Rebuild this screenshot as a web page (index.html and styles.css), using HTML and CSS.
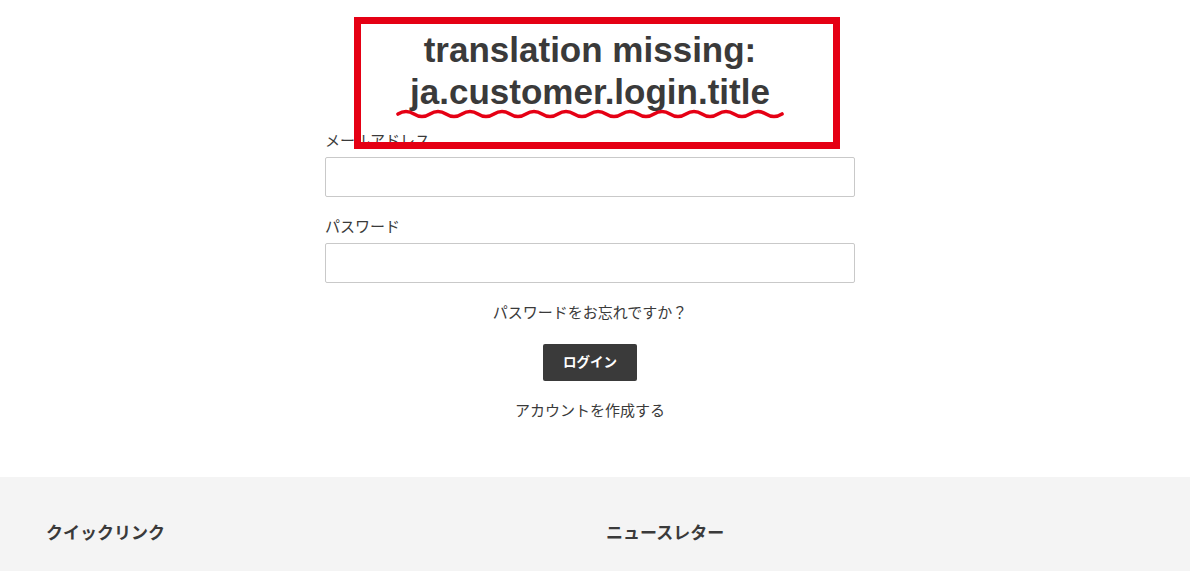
FILE: index.html
```html
<!DOCTYPE html>
<html lang="ja">
<head>
<meta charset="utf-8">
<title>ログイン</title>
<link rel="stylesheet" href="styles.css">
</head>
<body>
<main class="main">
  <div class="login">
    <h1 class="title">translation missing:<br>ja.customer.login.title</h1>
    <form class="form">
      <label class="label" for="email">メールアドレス</label>
      <input class="input" id="email" type="email">
      <label class="label" for="pw">パスワード</label>
      <input class="input" id="pw" type="password">
      <a class="link forgot" href="#">パスワードをお忘れですか？</a>
      <button class="btn" type="button">ログイン</button>
      <a class="link create" href="#">アカウントを作成する</a>
    </form>
  </div>
</main>
<div class="annot-box"></div>
<svg class="annot-wave" width="392" height="16" viewBox="0 0 392 16">
  <path d="M2 8 q8 -5 16 0 t16 0 t16 0 t16 0 t16 0 t16 0 t16 0 t16 0 t16 0 t16 0 t16 0 t16 0 t16 0 t16 0 t16 0 t16 0 t16 0 t16 0 t16 0 t16 0 t16 0 t16 0 t16 0 t16 0" fill="none" stroke="#e50014" stroke-width="3.6" stroke-linecap="round"/>
</svg>
<footer class="footer">
  <div class="footer-grid">
    <div class="col">
      <h2 class="fhead">クイックリンク</h2>
      <a class="flink" href="#">検索</a>
    </div>
    <div class="col">
      <h2 class="fhead">ニュースレター</h2>
    </div>
  </div>
</footer>
</body>
</html>
```
FILE: styles.css
```css
* { box-sizing: border-box; }
body {
  margin: 0;
  font-family: "Liberation Sans", "Noto Sans CJK JP", sans-serif;
  color: #3a3a3a;
  background: #fff;
  position: relative;
}
.main {
  display: flex;
  justify-content: center;
  padding: 29px 10px 56px 0;
}
.login { width: 530px; }
.title {
  margin: 0 0 16px;
  text-align: center;
  font-family: "Liberation Sans", "Noto Sans CJK JP", sans-serif;
  font-size: 35px;
  line-height: 42px;
  font-weight: 700;
  color: #3a3a3a;
}
.form {
  display: flex;
  flex-direction: column;
}
.label {
  font-family: "Noto Sans CJK JP", sans-serif;
  font-size: 15px;
  line-height: 22px;
  color: #3a3a3a;
  margin-bottom: 6px;
}
.input {
  height: 40px;
  width: 100%;
  border: 1px solid #c9c9c9;
  border-radius: 2px;
  margin: 0 0 18px;
  background: #fff;
}
.link {
  font-family: "Noto Sans CJK JP", sans-serif;
  font-size: 15px;
  line-height: 22px;
  text-align: center;
  color: #3a3a3a;
  text-decoration: none;
}
.btn {
  align-self: center;
  margin: 21px 0 18px;
  width: 94px;
  height: 37px;
  border: 0;
  border-radius: 2px;
  background: #3a3a3a;
  color: #fff;
  font-family: "Noto Sans CJK JP", sans-serif;
  font-weight: 700;
  font-size: 13.5px;
  line-height: 1;
  padding: 0 0 2px;
}
.annot-box {
  position: absolute;
  left: 354px;
  top: 17px;
  width: 486px;
  height: 132px;
  border: 7px solid #e50014;
}
.annot-wave {
  position: absolute;
  left: 396px;
  top: 106px;
}
.footer {
  background: #f4f4f4;
  padding: 43px 46px 40px;
}
.footer-grid {
  display: grid;
  grid-template-columns: 538px 1fr;
  column-gap: 22px;
}
.fhead {
  margin: 0 0 24px;
  font-family: "Noto Sans CJK JP", sans-serif;
  font-size: 17px;
  line-height: 24px;
  font-weight: 700;
  color: #3a3a3a;
}
.flink {
  font-family: "Noto Sans CJK JP", sans-serif;
  font-size: 15px;
  line-height: 22px;
  color: #3a3a3a;
  text-decoration: none;
}
```
